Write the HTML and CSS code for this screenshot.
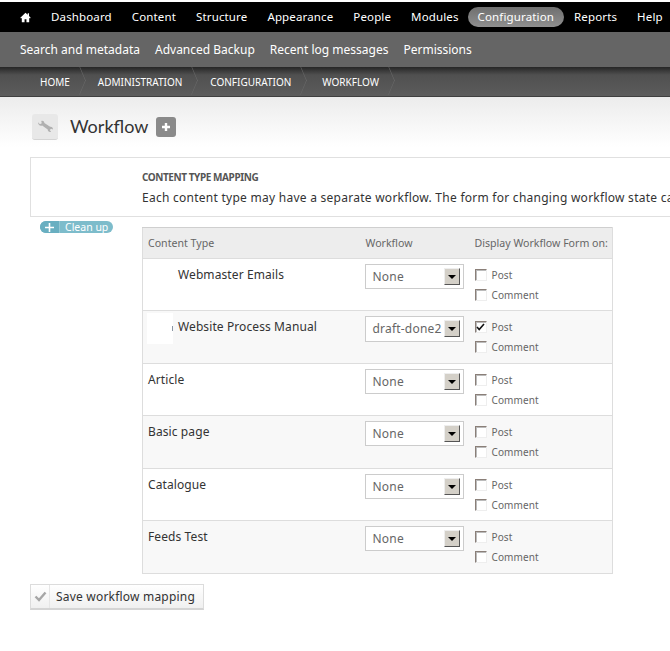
FILE: index.html
```html
<!DOCTYPE html>
<html lang="en">
<head>
<meta charset="utf-8">
<title>Workflow</title>
<link rel="stylesheet" href="styles.css">
</head>
<body>
<nav class="toolbar">
  <a class="home" href="#"><svg width="12" height="11" viewBox="0 0 14 13"><path d="M7 0.5 0.4 6.8 1.3 7.7 2.3 6.9V12.6H5.8V8.6H8.2V12.6H11.7V6.9L12.7 7.7 13.6 6.8 11.5 4.7V1.2H9.8V3.1Z" fill="#fff"/></svg></a>
  <a href="#">Dashboard</a>
  <a href="#">Content</a>
  <a href="#">Structure</a>
  <a href="#">Appearance</a>
  <a href="#">People</a>
  <a href="#">Modules</a>
  <a href="#" class="active">Configuration</a>
  <a href="#">Reports</a>
  <a href="#">Help</a>
</nav>
<nav class="shortcuts">
  <a href="#">Search and metadata</a>
  <a href="#">Advanced Backup</a>
  <a href="#">Recent log messages</a>
  <a href="#">Permissions</a>
</nav>
<nav class="crumbs">
  <a href="#">HOME</a>
  <a href="#">ADMINISTRATION</a>
  <a href="#">CONFIGURATION</a>
  <a href="#">WORKFLOW</a>
</nav>
<header class="title-bar">
  <span class="page-icon"><svg width="17" height="13" viewBox="0 0 18 14"><path d="M1 2.5 3 4.6 5 3.6 4.4 1.2C6 .4 7.6 1.4 7.8 3.2L14 7.4C15.6 7 17.2 8.2 17 10.2L15 9.4 13.6 10.8 15 12.6C13 13.4 11.4 12 11.4 10.2L5.4 6C3.2 7 .8 5 1 2.5Z" fill="#b0b0b0"/></svg></span>
  <h1>Workflow</h1>
  <span class="add-btn"><svg width="10" height="10" viewBox="0 0 10 10"><path d="M3.8 1H6.2V3.8H9V6.2H6.2V9H3.8V6.2H1V3.8H3.8Z" fill="#fff"/></svg></span>
</header>
<main>
  <section class="mapping">
    <h2>CONTENT TYPE MAPPING</h2>
    <p>Each content type may have a separate workflow. The form for changing workflow state can be displayed on the node.</p>
  </section>
  <a class="cleanup" href="#"><span class="cleanup-icon"><svg width="9" height="9" viewBox="0 0 9 9"><path d="M3.7 0H5.3V3.7H9V5.3H5.3V9H3.7V5.3H0V3.7H3.7Z" fill="#fff"/></svg></span><span class="cleanup-text">Clean up</span></a>
  <table class="types">
    <thead>
      <tr><th class="c1">Content Type</th><th class="c2">Workflow</th><th class="c3">Display Workflow Form on:</th></tr>
    </thead>
    <tbody>
      <tr>
        <td class="indent">Webmaster Emails</td>
        <td><span class="select">None<i class="arrow"></i></span></td>
        <td><label class="check"><i class="box"></i>Post</label><label class="check"><i class="box"></i>Comment</label></td>
      </tr>
      <tr class="even">
        <td class="indent"><span class="mask"></span>Website Process Manual</td>
        <td><span class="select tall">draft-done2<i class="arrow"></i></span></td>
        <td><label class="check"><i class="box"><svg width="9" height="8" viewBox="0 0 9 8"><path d="M1 4 3.2 6.5 8 1" fill="none" stroke="#111" stroke-width="1.6"/></svg></i>Post</label><label class="check"><i class="box"></i>Comment</label></td>
      </tr>
      <tr>
        <td class="plain">Article</td>
        <td><span class="select">None<i class="arrow"></i></span></td>
        <td><label class="check"><i class="box"></i>Post</label><label class="check"><i class="box"></i>Comment</label></td>
      </tr>
      <tr class="even">
        <td class="plain">Basic page</td>
        <td><span class="select">None<i class="arrow"></i></span></td>
        <td><label class="check"><i class="box"></i>Post</label><label class="check"><i class="box"></i>Comment</label></td>
      </tr>
      <tr>
        <td class="plain">Catalogue</td>
        <td><span class="select">None<i class="arrow"></i></span></td>
        <td><label class="check"><i class="box"></i>Post</label><label class="check"><i class="box"></i>Comment</label></td>
      </tr>
      <tr class="even">
        <td class="plain">Feeds Test</td>
        <td><span class="select">None<i class="arrow"></i></span></td>
        <td><label class="check"><i class="box"></i>Post</label><label class="check"><i class="box"></i>Comment</label></td>
      </tr>
    </tbody>
  </table>
  <button class="save" type="button"><span class="save-icon"><svg width="13" height="11" viewBox="0 0 13 11"><path d="M1.5 5.5 5 9 11.5 1.5" fill="none" stroke="#a6a6a6" stroke-width="2.4"/></svg></span><span class="save-text">Save workflow mapping</span></button>
</main>
</body>
</html>
```
FILE: styles.css
```css
* { box-sizing: border-box; }
html, body { margin: 0; padding: 0; }
body {
  width: 670px;
  height: 651px;
  overflow: hidden;
  background: #fff;
  color: #333;
  font-family: "Noto Sans", "DejaVu Sans", sans-serif;
  font-size: 12px;
}
a { color: inherit; text-decoration: none; }
.toolbar {
  height: 30px;
  margin-top: 2px;
  background: #000;
  color: #fff;
  display: flex;
  align-items: center;
  padding-left: 20px;
  white-space: nowrap;
  font-size: 11.5px;
  letter-spacing: .14px;
}
.toolbar a { padding: 0 10px; line-height: 20px; }
.toolbar .home { padding: 0; margin-right: 10px; display: flex; width: 11px; }
.toolbar a.active {
  margin-left: -1px;
  background: linear-gradient(#6f6f6f, #8f8f8f);
  border-radius: 10px;
}
.shortcuts {
  height: 35px;
  background: #656565;
  color: #fff;
  display: flex;
  align-items: center;
  gap: 15px;
  padding-left: 20px;
  white-space: nowrap;
}
.crumbs {
  height: 30px;
  background: linear-gradient(#262626 0, #505050 8px, #5c5c5c 100%);
  border-bottom: 1px solid #3f3f3f;
  color: #fff;
  display: flex;
  padding-left: 26px;
  font-size: 10px;
  line-height: 30px;
  white-space: nowrap;
}
.crumbs a {
  position: relative;
  padding: 0 14px;
}
.crumbs a:last-child { margin-left: 3px; }
.crumbs a::after {
  content: "";
  position: absolute;
  top: 3px;
  right: -6px;
  width: 20px;
  height: 20px;
  border-top: 1px solid #6a6a6a;
  border-right: 1px solid #6a6a6a;
  transform: scaleX(.42) rotate(45deg);
}
.title-bar {
  height: 60px;
  background: linear-gradient(#ececec, #fff 50px);
  display: flex;
  align-items: center;
  padding: 0 0 0 32px;
}
.page-icon {
  width: 26px;
  height: 26px;
  border-radius: 3px;
  background: #e8e8e8;
  border-bottom: 1px solid #d4d4d4;
  display: flex;
  align-items: center;
  justify-content: center;
}
h1 {
  margin: -2px 0 0 12px;
  font-family: Lato, "Noto Sans", sans-serif;
  font-size: 18px;
  font-weight: 400;
  color: #333;
  line-height: 26px;
}
.add-btn {
  width: 20px;
  height: 20px;
  margin-left: 8px;
  border-radius: 3px;
  background: #8a8a8a;
  display: flex;
  align-items: center;
  justify-content: center;
}
main { padding: 0 0 0 30px; }
.mapping {
  width: 700px;
  height: 60px;
  border: 1px solid #e0e0e0;
  padding: 12px 0 0 111px;
  white-space: nowrap;
}
.mapping h2 {
  margin: 0;
  font-size: 10px;
  line-height: 14px;
  font-weight: 700;
  letter-spacing: -.42px;
  color: #555;
}
.mapping p {
  margin: 5px 0 0;
  font-size: 12px;
  line-height: 18px;
  letter-spacing: .26px;
  color: #333;
}
.cleanup {
  display: flex;
  width: 73px;
  height: 12px;
  margin: 4px 0 0 10px;
  border-radius: 6px;
  background: #7dbccb;
  color: #fff;
  font-size: 10.5px;
  line-height: 12px;
  overflow: hidden;
  white-space: nowrap;
}
.cleanup-icon {
  width: 20px;
  display: flex;
  align-items: center;
  justify-content: center;
  border-right: 1px solid #93c7d4;
  background: #69afc1;
}
.cleanup-text { padding-left: 5px; }
.types {
  margin: -6px 0 0 112px;
  width: 471px;
  border-collapse: collapse;
  table-layout: fixed;
  border: 1px solid #ddd;
  border-top-color: #cfcfcf;
}
.types th {
  height: 31px;
  background: #ededed;
  font-size: 10.6px;
  font-weight: 400;
  text-align: left;
  color: #666;
  padding: 0 0 0 6px;
  white-space: nowrap;
  border-bottom: 1px solid #ddd;
}
.types th.c1 { width: 217px; padding-left: 5px; }
.c2 { width: 109px; }
.types td {
  height: 52px;
  vertical-align: top;
  border-bottom: 1px solid #ddd;
  padding: 7px 0 0 6px;
  line-height: 18px;
  font-size: 12px;
  letter-spacing: .1px;
}
.types td.plain { padding-left: 5px; }
.types td.indent { padding-left: 35px; position: relative; }
.types tr.even td { background: #f8f8f8; height: 53px; }
.mask {
  position: absolute;
  left: 4px;
  top: 2px;
  width: 26px;
  height: 31px;
  background: #fff;
  border-right: 1px solid #fff;
}
.mask::after {
  content: "";
  position: absolute;
  right: -1px;
  top: 13px;
  width: 1px;
  height: 5px;
  background: #8a96a4;
}
.select {
  position: relative;
  display: block;
  width: 99px;
  height: 25px;
  margin: -2px 0 0 -1px;
  border: 1px solid #ccc;
  background: #fff;
  padding-left: 7px;
  line-height: 24px;
  color: #666;
  font-size: 12px;
  letter-spacing: .2px;
}
.select.tall { height: 26px; }
.arrow {
  position: absolute;
  right: 3px;
  top: 3px;
  width: 16px;
  height: 17px;
  background: #d4d0c8;
  border: 1px solid;
  border-color: #eee #555 #555 #eee;
}
.arrow::after {
  content: "";
  position: absolute;
  left: 3px;
  top: 6px;
  border: 4px solid transparent;
  border-top: 4px solid #000;
  border-bottom: 0;
}
.check {
  display: flex;
  align-items: center;
  height: 20.5px;
  margin-top: -1px;
  color: #666;
  font-size: 10px;
  letter-spacing: .1px;
}
.box {
  flex: none;
  width: 12px;
  height: 12px;
  margin-right: 5px;
  background: #fff;
  border: 1px solid;
  border-color: #8a7f78 #eee #eee #8a7f78;
  box-shadow: inset 1px 1px 0 #bbb;
  display: flex;
  align-items: center;
  justify-content: center;
}
.save {
  display: flex;
  align-items: stretch;
  width: 174px;
  height: 26px;
  margin: 10px 0 0;
  padding: 0;
  border: 1px solid #dcdcdc;
  border-bottom: 2px solid #d4d4d4;
  background: linear-gradient(#fff, #f0f0f0);
  font-family: inherit;
  font-size: 12px;
  color: #333;
  letter-spacing: .2px;
}
.save-icon {
  width: 19px;
  border-right: 1px solid #e6e6e6;
  display: flex;
  align-items: center;
  justify-content: center;
}
.save-text { padding: 1px 0 0 6px; line-height: 22px; white-space: nowrap; }
```
